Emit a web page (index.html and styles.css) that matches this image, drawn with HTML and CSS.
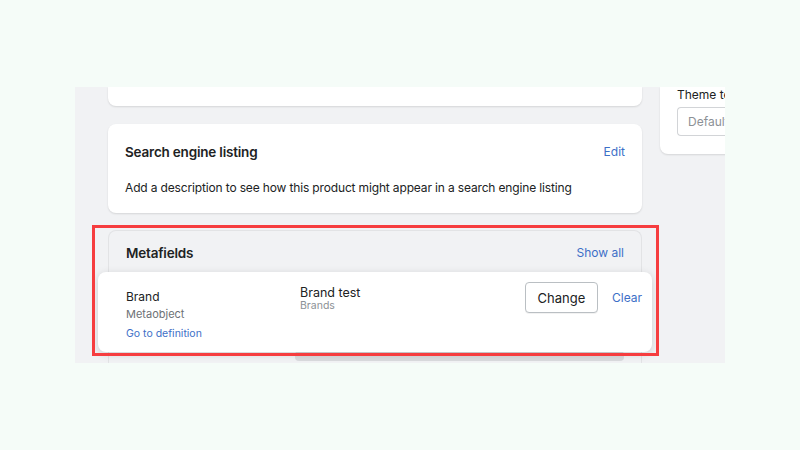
FILE: index.html
```html
<!DOCTYPE html>
<html lang="en">
<head>
    <meta charset="UTF-8">
    <meta name="viewport" content="width=device-width, initial-scale=1.0">
    <title>Product - metafields</title>
    <link rel="stylesheet" href="styles.css">
</head>
<body>
    <div class="frame">
        <div class="main">
            <div class="card card-cut"></div>

            <div class="card seo">
                <div class="card-head">
                    <h2>Search engine listing</h2>
                    <a href="#" class="link">Edit</a>
                </div>
                <p class="seo-text">Add a description to see how this product might appear in a search engine listing</p>
            </div>

            <div class="card metafields">
                <div class="card-head">
                    <h2>Metafields</h2>
                    <a href="#" class="link">Show all</a>
                </div>
                <div class="meta-field"></div>
            </div>
        </div>

        <div class="side">
            <div class="card side-card">
                <label class="side-label">Theme template</label>
                <div class="side-input">Default product</div>
            </div>
        </div>

        <!-- expanded metafield row, floating over the dimmed card -->
        <div class="meta-row">
            <div class="meta-name">
                <div class="meta-title">Brand</div>
                <div class="meta-type">Metaobject</div>
                <a href="#" class="link small">Go to definition</a>
            </div>
            <div class="meta-value">
                <div class="value-title">Brand test</div>
                <div class="value-sub">Brands</div>
            </div>
            <button class="btn">Change</button>
            <a href="#" class="link clear">Clear</a>
        </div>

        <div class="highlight"></div>
    </div>
</body>
</html>
```

FILE: styles.css
```css
body {
    margin: 0;
    background-color: #f5fcf8;
    font-family: Inter, "Noto Sans", sans-serif;
    color: #202223;
}
.frame {
    position: relative;
    margin: 87px 0 0 75px;
    width: 650px;
    height: 276px;
    background-color: #f1f2f4;
    overflow: hidden;
    display: flex;
    gap: 18px;
    padding-left: 33px;
    box-sizing: border-box;
}
.main {
    width: 534px;
    flex-shrink: 0;
    display: flex;
    flex-direction: column;
}
.card {
    flex-shrink: 0;
    background-color: #fff;
    border-radius: 8px;
    box-shadow: 0 1px 2px rgba(0, 0, 0, 0.12);
}
.card-cut {
    height: 19px;
    border-radius: 0 0 8px 8px;
}
.seo {
    margin-top: 18px;
    height: 89px;
    box-sizing: border-box;
    padding: 20px 17px 0 17px;
}
.card-head {
    display: flex;
    justify-content: space-between;
    align-items: center;
    line-height: 16px;
}
.card-head h2 {
    margin: 0;
    font-size: 13.5px;
    font-weight: 600;
    letter-spacing: -0.2px;
}
.link {
    color: #3d6fc7;
    text-decoration: none;
    font-size: 12.5px;
}
.card-head .link {
    font-size: 12px;
}
.seo-text {
    margin: 20px 0 0 0;
    font-size: 12px;
    letter-spacing: -0.15px;
}
.metafields {
    margin-top: 17px;
    flex: 1 0 auto;
    background-color: #f1f2f4;
    border: 1px solid #e2e3e5;
    border-bottom: none;
    box-shadow: none;
    border-radius: 8px 8px 0 0;
    padding: 14px 17px 0 17px;
}
.meta-field {
    margin: 90px 0 0 169px;
    height: 10px;
    border-radius: 4px;
    background-color: #d9dadd;
}
.side {
    width: 120px;
    flex-shrink: 0;
}
.side-card {
    height: 67px;
    border-radius: 0 0 0 8px;
    padding: 0 0 0 17px;
    box-sizing: border-box;
}
.side-label {
    display: block;
    font-size: 12px;
    padding-top: 1px;
    line-height: 14px;
}
.side-input {
    margin-top: 5px;
    height: 29px;
    box-sizing: border-box;
    border: 1px solid #d2d4d7;
    border-right: none;
    border-radius: 4px 0 0 4px;
    padding: 6px 0 0 10px;
    font-size: 12px;
    color: #8c9196;
    white-space: nowrap;
}
.meta-row {
    position: absolute;
    left: 23px;
    top: 185px;
    width: 554px;
    height: 80px;
    box-sizing: border-box;
    background-color: #fff;
    border-radius: 8px;
    box-shadow: 0 2px 8px rgba(0, 0, 0, 0.15);
    display: flex;
    align-items: flex-start;
    padding: 0 10px 0 28px;
}
.meta-name {
    width: 174px;
    padding-top: 18px;
}
.meta-title {
    font-size: 12px;
    line-height: 14px;
}
.meta-type {
    margin-top: 3px;
    font-size: 11px;
    line-height: 14px;
    color: #6d7175;
}
.link.small {
    display: block;
    margin-top: 6px;
    font-size: 10.5px;
    line-height: 14px;
}
.meta-value {
    flex: 1;
    padding-top: 13px;
}
.value-title {
    font-size: 12.5px;
    line-height: 15px;
}
.value-sub {
    font-size: 10.5px;
    line-height: 12px;
    color: #8c9196;
}
.btn {
    margin-top: 10px;
    width: 73px;
    height: 31px;
    background-color: #fff;
    border: 1px solid #babfc3;
    border-radius: 4px;
    font-family: inherit;
    font-size: 13px;
    color: #202223;
    box-shadow: 0 1px 0 rgba(0, 0, 0, 0.05);
}
.clear {
    margin: 18px 0 0 14px;
    font-size: 12px;
}
.highlight {
    position: absolute;
    left: 17px;
    top: 138px;
    width: 567px;
    height: 131px;
    box-sizing: border-box;
    border: 3.5px solid #f63d3f;
}
```
